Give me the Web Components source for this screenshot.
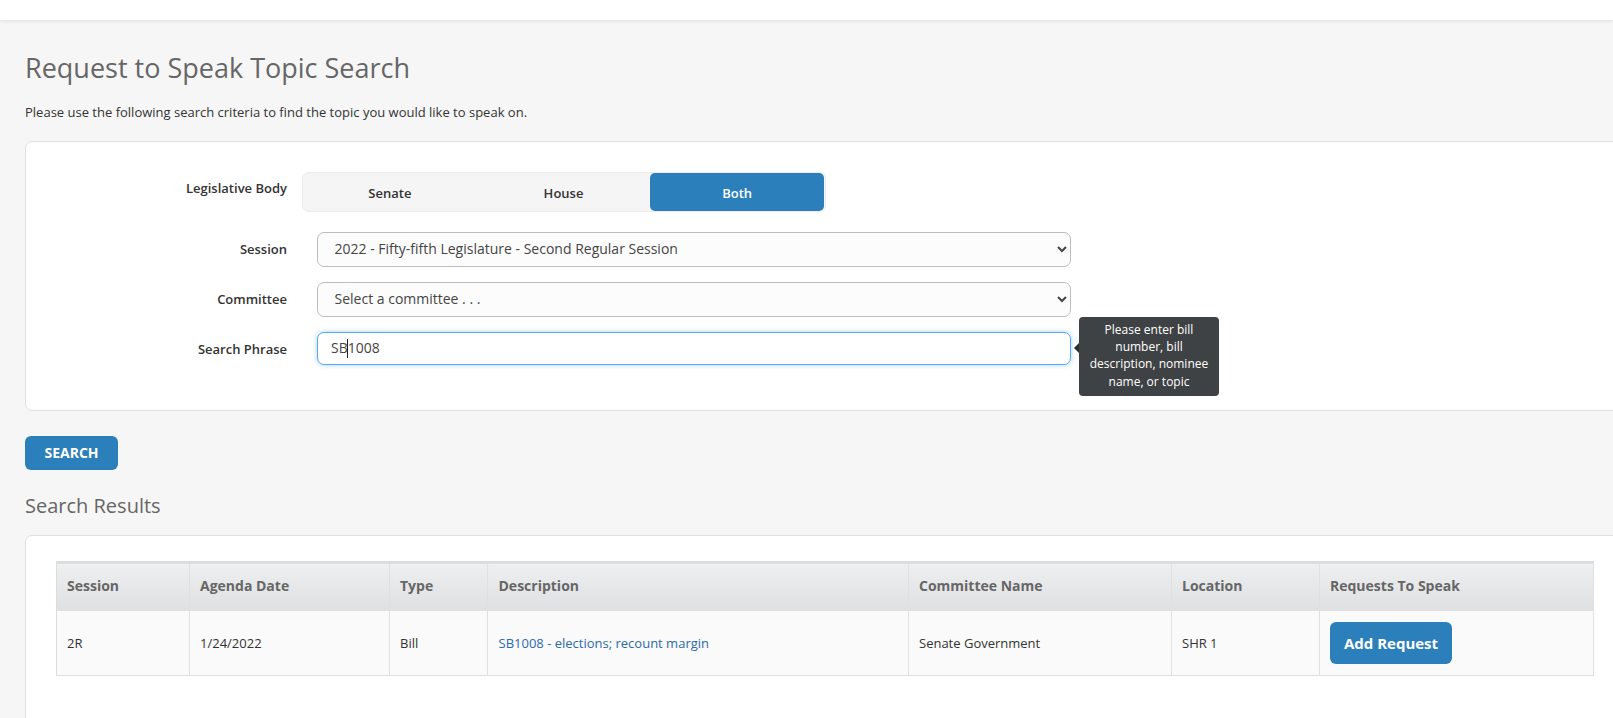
<!DOCTYPE html>
<html lang="en"><head><meta charset="utf-8"><title>Request to Speak Topic Search</title>
<style>
html,body{margin:0;padding:0;height:718px;overflow:hidden;background:#f6f6f6;font-family:"Open Sans",sans-serif;color:#333}
</style></head><body>
<rts-topbar></rts-topbar>
<rts-page>
  <h-title slot="title">Request to Speak Topic Search</h-title>
  <span slot="intro">Please use the following search criteria to find the topic you would like to speak on.</span>
  <rts-card slot="form" class="form">
    <rts-search-form></rts-search-form>
  </rts-card>
  <rts-button slot="action" kind="caps">SEARCH</rts-button>
  <span slot="subtitle">Search Results</span>
  <rts-card slot="results">
    <rts-results></rts-results>
  </rts-card>
</rts-page>
<script>
function def(name, css, html){
  customElements.define(name, class extends HTMLElement{
    constructor(){super();this.attachShadow({mode:'open'}).innerHTML='<style>'+css+'</style>'+html;}
  });
}
def('h-title',':host{display:block}','<slot></slot>');
def('rts-topbar',':host{display:block;height:20px;background:#fff;box-shadow:0 1px 4px rgba(0,0,0,.10);position:relative;z-index:1}','');
def('rts-page',`
:host{display:block;width:1588px;height:698px;overflow:hidden;padding-left:25px}
.title{font-size:27px;line-height:36px;color:#666;padding-top:30px;font-weight:400}
.intro{font-size:13px;line-height:18px;color:#333;margin-top:17px;margin-bottom:20px}
.action{margin-top:25px;display:flex}
.sub{font-size:20px;line-height:26px;color:#666;margin-top:23px;margin-bottom:16px}
`,`
<div class="title"><slot name="title"></slot></div>
<div class="intro"><slot name="intro"></slot></div>
<slot name="form"></slot>
<div class="action"><slot name="action"></slot></div>
<div class="sub"><slot name="subtitle"></slot></div>
<slot name="results"></slot>`);
def('rts-card',`:host{display:block;box-sizing:border-box;background:#fff;border:1px solid #e0e0e0;border-radius:7px;width:1600px}`,'<slot></slot>');
def('rts-button',`
:host{display:inline-flex;align-items:center;justify-content:center;background:#2b7fba;color:#fff;border-radius:6px;font-weight:700;box-sizing:border-box}
:host([kind=caps]){width:93px;height:34px;font-size:14px;padding-bottom:1px}
:host([kind=big]){width:122px;height:42px;font-size:15px}
`,'<slot></slot>');
def('rts-segmented',`
:host{display:flex;box-sizing:border-box;width:524px;height:40px;padding:0 1px 0 0;background:#f5f5f5;border:1px solid #ececec;border-radius:7px;font-size:13px;font-weight:600;color:#333}
span{flex:1;display:flex;align-items:center;justify-content:center;padding-top:1px}
.on{background:#2b7fba;color:#fff;border-radius:5px}
`,'<span>Senate</span><span>House</span><span class="on">Both</span>');
def('rts-field',`
:host{display:flex;align-items:center;position:relative}
label{width:261px;flex:none;text-align:right;font-size:13px;font-weight:600;color:#333;line-height:18px}
:host(.sel) label{padding-bottom:2px}
.c{margin-left:30px;position:relative;display:block}
`,'<label><slot name="label"></slot></label><div class="c"><slot></slot></div>');
def('rts-select',`
:host{display:block}
select{display:block;width:754px;height:35px;box-sizing:border-box;border:1px solid #bdbdbd;border-radius:7px;background:#fcfcfc;color:#444;font:14px "Open Sans",sans-serif;padding:0 12px 2px 12.5px;outline:none}
`,'<select><option></option></select>');
def('rts-search-input',`
:host{display:block;position:relative}
input{display:block;width:754px;height:33px;box-sizing:border-box;border:1px solid #5aaaee;border-radius:7px;background:#fff;color:#444;font:14px "Open Sans",sans-serif;padding:0 13px 2px;outline:none;box-shadow:0 0 5px rgba(90,170,238,.55)}
i{position:absolute;left:30px;top:7px;width:1px;height:19px;background:#222}
`,'<input type="text" value="SB1008" aria-label="Search Phrase"><i></i>');
def('rts-tooltip',`
:host{position:absolute;left:762px;top:-15px;width:140px;box-sizing:border-box;background:#3f4244;color:#fff;border-radius:4px;font-size:12px;line-height:17.2px;text-align:center;padding:4px 8px 6px;z-index:2}
:host::before{content:"";position:absolute;left:-5px;top:26px;border:5px solid transparent;border-left:0;border-right-color:#2b2d2f}
`,'<slot></slot>');
def('rts-search-form',`
:host{display:block;padding:30px 0 0 0;height:268px;box-sizing:border-box}
.seg{display:flex}
.seg label{width:261px;text-align:right;font-size:13px;font-weight:600;color:#333;line-height:18px;padding-top:7px;box-sizing:border-box;height:40px}
.seg .w{margin-left:15px}
rts-field{margin-top:15px}
.first{margin-top:20px}
`,`
<div class="seg"><label>Legislative Body</label><div class="w"><rts-segmented></rts-segmented></div></div>
<rts-field class="first sel"><span slot="label">Session</span><rts-select id="s"></rts-select></rts-field>
<rts-field class="sel"><span slot="label">Committee</span><rts-select id="c"></rts-select></rts-field>
<rts-field><span slot="label">Search Phrase</span><rts-search-input></rts-search-input><rts-tooltip>Please enter bill number, bill description, nominee name, or topic</rts-tooltip></rts-field>`);
def('rts-results',`
:host{display:block;padding:25px 0 0 30px;height:260px;box-sizing:border-box}
table{border-collapse:collapse;table-layout:fixed;width:1537px;font-size:13px;color:#333}
th,td{text-align:left;padding:0 0 0 10px;border:1px solid #e0e0e0}
th{height:48px;box-sizing:border-box;padding-bottom:2px;background:linear-gradient(#eeeff1,#dfe0e2);color:#666;font-size:14px;font-weight:700;border-color:#dfe0e2;border-left-color:#e6e7e9;border-top:2px solid #dcdcdc;border-bottom:0}
th:first-child,td:first-child{border-left-color:#dcdcdc}
th:nth-child(4),td:nth-child(4){padding-left:10.5px}
td{height:65px;box-sizing:border-box;background:#fafafa}
a{color:#2a6ba8;text-decoration:none}
`,`
<table><colgroup><col style="width:133px"><col style="width:200px"><col style="width:98px"><col style="width:421px"><col style="width:263px"><col style="width:148px"><col style="width:274px"></colgroup>
<thead><tr><th>Session</th><th>Agenda Date</th><th>Type</th><th>Description</th><th>Committee Name</th><th>Location</th><th>Requests To Speak</th></tr></thead>
<tbody><tr><td>2R</td><td>1/24/2022</td><td>Bill</td><td><a href="#">SB1008 - elections; recount margin</a></td><td>Senate Government</td><td>SHR 1</td><td><rts-button kind="big">Add Request</rts-button></td></tr></tbody></table>`);
const form=document.querySelector('rts-search-form').shadowRoot;
form.getElementById('s').shadowRoot.querySelector('option').textContent='2022 - Fifty-fifth Legislature - Second Regular Session';
form.getElementById('c').shadowRoot.querySelector('option').textContent='Select a committee . . .';
</script>
</body></html>
